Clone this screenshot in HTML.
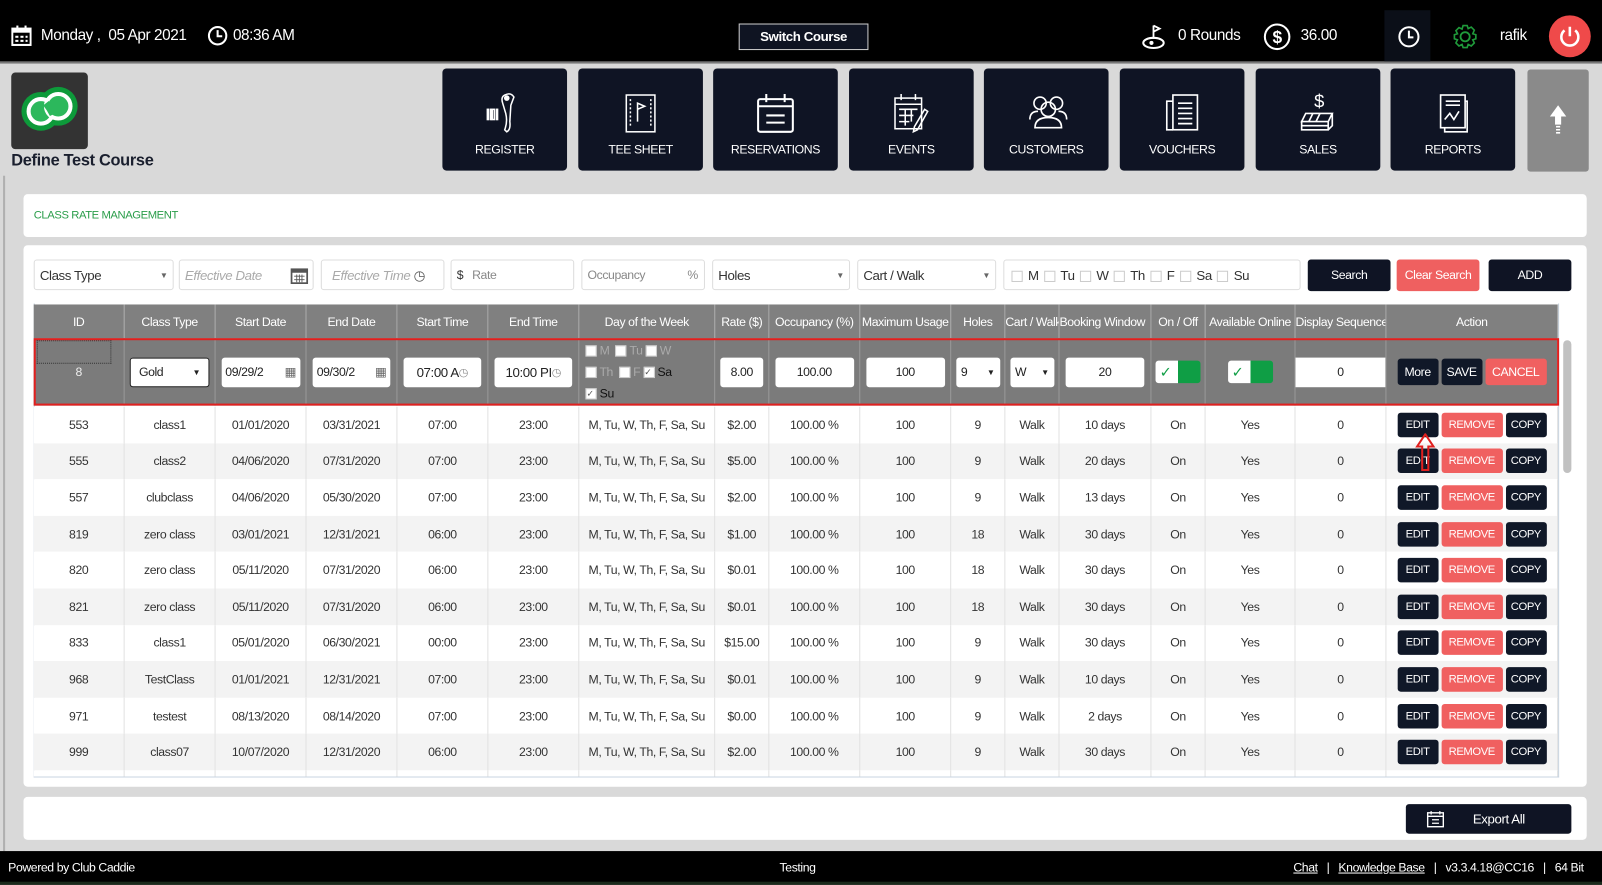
<!DOCTYPE html>
<html><head><meta charset="utf-8">
<style>
*{box-sizing:border-box;margin:0;padding:0}
body{width:1602px;height:885px;overflow:hidden;background:#d9d9d9;font-family:"Liberation Sans Narrow","Liberation Sans",sans-serif;letter-spacing:-0.4px}
#w{position:absolute;left:0;top:0;width:1568px;height:866px;transform:scale(1.0217);transform-origin:0 0;background:#d9d9d9}
.a{position:absolute}
.top{left:0;top:0;width:1568px;height:62px;background:#000;border-bottom:2px solid #777}
.wt{color:#fff;font-size:15px}
.nav{top:67px;width:122px;height:100px;background:#0f1424;border-radius:4px;color:#fff;font-size:12px;text-align:center}
.nav span{position:absolute;left:0;right:0;top:72px}
.nav svg{position:absolute;left:41px;top:22px}
.panel{background:#fff;border-radius:4px;left:23px;width:1530px}
.inp{top:254px;height:30px;background:#fff;border:1px solid #ddd;border-radius:3px;font-size:13px;color:#333;padding:7px 5px}
.ph{color:#aaa;font-style:italic}
.btn{color:#fff;font-size:12px;text-align:center;border-radius:3px}
.g{display:grid;grid-template-columns:89px 89px 89px 89px 89px 89px 133px 53px 89px 89px 53px 53px 90px 53px 88px 89px 168px;position:absolute;left:33px;width:1492px}
.g>div{border-right:1px solid #e2e2e2;display:flex;align-items:center;justify-content:center;font-size:12px;color:#333;white-space:nowrap;overflow:hidden}
.hd>div{color:#fff;border-right:1px solid #aaa;background:#808080}
.r{height:35.6px}
.r:nth-child(even){background:#f3f3f3}
.r:nth-child(odd){background:#fff}
.eb{display:inline-block;height:24px;line-height:24px;color:#fff;font-size:11px;border-radius:3px;margin:0 1.5px;text-align:center}
.ed{background:#101828;width:40px}.rm{background:#f06060;width:60px}.cp{background:#101828;width:40px}
.wi{background:#fff;height:29px;border-radius:3px;font-size:12px;color:#222;display:flex;align-items:center;justify-content:center}
.cb{display:inline-block;width:11px;height:11px;background:#fff;border:1px solid #ccc;vertical-align:middle}
</style></head><body><div id="w">
<div class="a top"></div>
<svg class="a" style="left:11px;top:25px" width="20" height="20" viewBox="0 0 20 20"><rect x="1" y="3" width="18" height="16" fill="none" stroke="#fff" stroke-width="2"/><rect x="1" y="3" width="18" height="4" fill="#fff"/><g fill="#fff"><rect x="4" y="10" width="3" height="2"/><rect x="9" y="10" width="3" height="2"/><rect x="14" y="10" width="2" height="2"/><rect x="4" y="14" width="3" height="2"/><rect x="9" y="14" width="3" height="2"/><rect x="14" y="14" width="2" height="2"/><rect x="5" y="0" width="2" height="4"/><rect x="13" y="0" width="2" height="4"/></g></svg>
<div class="a wt" style="left:40px;top:26px">Monday ,&nbsp; 05 Apr 2021</div>
<svg class="a" style="left:203px;top:25px" width="20" height="20" viewBox="0 0 20 20"><circle cx="10" cy="10" r="8.5" fill="none" stroke="#fff" stroke-width="2"/><path d="M10 4.5V10.5H14.5" fill="none" stroke="#fff" stroke-width="2"/></svg>
<div class="a wt" style="left:228px;top:26px">08:36 AM</div>
<div class="a" style="left:723px;top:23px;width:127px;height:26px;border:1.5px solid #ccc;background:#0f1422;color:#fff;font-weight:bold;font-size:13px;text-align:center;line-height:23px;font-family:'Liberation Sans',sans-serif">Switch Course</div>
<svg class="a" style="left:1116px;top:22px" width="28" height="28" viewBox="0 0 28 28"><path d="M13 3V16M13 3L19 6L13 9" fill="none" stroke="#fff" stroke-width="1.8"/><ellipse cx="13" cy="20" rx="10" ry="5" fill="none" stroke="#fff" stroke-width="2"/><circle cx="11" cy="20" r="2" fill="#fff"/></svg>
<div class="a wt" style="left:1153px;top:26px">0 Rounds</div>
<svg class="a" style="left:1236px;top:22px" width="28" height="28" viewBox="0 0 28 28"><circle cx="14" cy="14" r="12" fill="none" stroke="#fff" stroke-width="2"/><text x="14" y="20" text-anchor="middle" fill="#fff" font-size="17" font-weight="bold" font-family="Liberation Sans">$</text></svg>
<div class="a wt" style="left:1273px;top:26px">36.00</div>
<div class="a" style="left:1355px;top:10px;width:45px;height:50px;background:#0b0f18"></div>
<svg class="a" style="left:1368px;top:25px" width="22" height="22" viewBox="0 0 20 20"><circle cx="10" cy="10" r="8.5" fill="none" stroke="#fff" stroke-width="1.8"/><path d="M10 4.5V10.5H14" fill="none" stroke="#fff" stroke-width="1.8"/></svg>
<svg class="a" style="left:1420px;top:22px" width="28" height="28" viewBox="0 0 28 28"><circle cx="14" cy="14" r="4.5" fill="none" stroke="#1f9a3a" stroke-width="1.8"/><path d="M12 3h4l1 3 3-1.5 3 3L21.5 11l3 1v4l-3 1 1.5 3-3 3-3-1.5-1 3h-4l-1-3-3 1.5-3-3L6.5 17l-3-1v-4l3-1L5 8l3-3 3 1.5z" fill="none" stroke="#1f9a3a" stroke-width="1.6"/></svg>
<div class="a wt" style="left:1468px;top:26px">rafik</div>
<div class="a" style="left:1516px;top:15px;width:41px;height:41px;border-radius:50%;background:#ef4a4a"></div>
<svg class="a" style="left:1524px;top:23px" width="25" height="25" viewBox="0 0 24 24"><path d="M7 6.5A8 8 0 1 0 17 6.5" fill="none" stroke="#fff" stroke-width="2.4"/><path d="M12 3V12" stroke="#fff" stroke-width="2.4"/></svg>

<div class="a" style="left:11px;top:71px;width:75px;height:75px;background:#333;border-radius:4px"></div>
<svg class="a" style="left:16px;top:82px" width="66" height="50" viewBox="0 0 66 50"><circle cx="24" cy="27" r="19" fill="#0d9a3a"/><circle cx="41" cy="22" r="19" fill="#0d9a3a"/><circle cx="24" cy="27" r="12" fill="#2cb85c" stroke="#fff" stroke-width="4"/><circle cx="41" cy="22" r="12" fill="#2cb85c" stroke="#fff" stroke-width="4"/><path d="M29 19Q33 24 36 30" stroke="#2cb85c" stroke-width="7"/></svg>
<div class="a" style="left:11px;top:149px;font-size:16px;font-weight:bold;color:#1a1f2e;font-family:'Liberation Sans',sans-serif;letter-spacing:-0.3px">Define Test Course</div>

<div class="a nav" style="left:433px"><svg width="40" height="44" viewBox="0 0 40 44"><g stroke="#fff" fill="none" stroke-width="1.5"><rect x="3" y="18" width="1" height="10"/><rect x="6" y="18" width="1" height="10"/><rect x="8" y="18" width="2" height="10"/><rect x="12" y="18" width="1" height="10"/><path d="M20 4Q26 1 29 6L26 14L25 30Q26 38 22 40L20 38Q23 30 21 22L18 12Q16 6 20 4Z"/><circle cx="22" cy="7" r="2" fill="#fff"/></g></svg><span>REGISTER</span></div>
<div class="a nav" style="left:566px"><svg width="40" height="44" viewBox="0 0 40 44"><g stroke="#fff" fill="none" stroke-width="1.5"><rect x="6" y="4" width="28" height="36"/><path d="M10 8V36M30 8V36" stroke-dasharray="2 2"/><path d="M17 30V12L24 15L17 18"/></g></svg><span>TEE SHEET</span></div>
<div class="a nav" style="left:698px"><svg width="40" height="44" viewBox="0 0 40 44"><g stroke="#fff" fill="none" stroke-width="2"><rect x="3" y="8" width="34" height="32" rx="2"/><path d="M3 15H37M11 3V11M29 3V11M11 24H29M11 31H29"/></g></svg><span>RESERVATIONS</span></div>
<div class="a nav" style="left:831px"><svg width="40" height="44" viewBox="0 0 40 44"><g stroke="#fff" fill="none" stroke-width="1.5"><rect x="4" y="7" width="26" height="30"/><path d="M4 13H30M10 3V9M24 3V9M8 18H26M8 24H22M8 30H18M14 18V34M20 18V30M36 20L26 38L22 40L23 35L33 18Z"/></g></svg><span>EVENTS</span></div>
<div class="a nav" style="left:963px"><svg width="44" height="44" viewBox="0 0 44 44"><g stroke="#fff" fill="none" stroke-width="1.6"><circle cx="14" cy="12" r="6"/><circle cx="30" cy="12" r="6"/><circle cx="22" cy="18" r="7"/><path d="M9 36Q9 26 22 26Q35 26 35 36ZM4 28Q4 20 12 20M40 28Q40 20 32 20"/></g></svg><span>CUSTOMERS</span></div>
<div class="a nav" style="left:1096px"><svg width="40" height="44" viewBox="0 0 40 44"><g stroke="#fff" fill="none" stroke-width="1.6"><rect x="11" y="4" width="24" height="34"/><path d="M11 10H5V38H11M16 12H30M16 17H30M16 22H30M16 27H30M16 32H30"/></g></svg><span>VOUCHERS</span></div>
<div class="a nav" style="left:1229px"><svg width="40" height="44" viewBox="0 0 40 44"><text x="21" y="16" text-anchor="middle" fill="#fff" font-size="18" font-family="Liberation Sans">$</text><g stroke="#fff" fill="none" stroke-width="1.6"><path d="M8 22H34L30 30H4ZM4 30H30V34H4ZM4 34H30V38H4ZM30 30L34 22V34L30 38M15 22L11 30M22 22L18 30"/></g></svg><span>SALES</span></div>
<div class="a nav" style="left:1361px"><svg width="40" height="44" viewBox="0 0 40 44"><g stroke="#fff" fill="none" stroke-width="1.6"><rect x="8" y="4" width="24" height="32"/><path d="M12 36V40H34V10H32M13 10H27M13 14H27M12 28L17 22L21 28L26 20"/></g></svg><span>REPORTS</span></div>
<div class="a" style="left:1495px;top:68px;width:60px;height:100px;background:#8a8a8a;border-radius:3px"></div>
<svg class="a" style="left:1516px;top:102px" width="18" height="30" viewBox="0 0 18 30"><path d="M9 1L17 12H12V20H6V12H1Z" fill="#fff"/><path d="M7 22H11M7 25H11M7 28H11" stroke="#fff" stroke-width="1.5"/></svg>
<div class="a" style="left:3px;top:172px;width:2px;height:661px;background:#b0b0b0"></div>

<div class="a panel" style="top:190px;height:42px"><div class="a" style="left:10px;top:15px;font-size:11px;color:#2a9d4a;font-family:'Liberation Sans',sans-serif">CLASS RATE MANAGEMENT</div></div>
<div class="a panel" style="top:240px;height:530px"></div>

<div class="a inp" style="left:33px;width:137px">Class Type<span style="position:absolute;right:5px;font-size:8px;top:10px;color:#666">▼</span></div>
<div class="a inp ph" style="left:175px;width:132px">Effective Date</div>
<svg class="a" style="left:284px;top:261px" width="18" height="17" viewBox="0 0 20 20"><rect x="1" y="3" width="18" height="16" fill="none" stroke="#555" stroke-width="2"/><rect x="1" y="3" width="18" height="4" fill="#555"/><path d="M4 11H16M4 15H16M7 9V18M10 9V18M13 9V18" stroke="#555"/></svg>
<div class="a inp ph" style="left:314px;width:121px;padding-left:10px">Effective Time <span style="font-style:normal;color:#555">&#9719;</span></div>
<div class="a inp" style="left:441px;width:121px;font-size:12px">$&nbsp;&nbsp; <span style="color:#888">Rate</span></div>
<div class="a inp" style="left:569px;width:121px;font-size:12px;color:#888">Occupancy<span style="position:absolute;right:6px">%</span></div>
<div class="a inp" style="left:697px;width:135px">Holes<span style="position:absolute;right:5px;font-size:8px;top:10px;color:#666">▼</span></div>
<div class="a inp" style="left:839px;width:136px">Cart / Walk<span style="position:absolute;right:5px;font-size:8px;top:10px;color:#666">▼</span></div>
<div class="a inp" style="left:982px;width:291px;padding-left:7px;font-size:13px;word-spacing:2px"><span class="cb"></span> M <span class="cb"></span> Tu <span class="cb"></span> W <span class="cb"></span> Th <span class="cb"></span> F <span class="cb"></span> Sa <span class="cb"></span> Su</div>
<div class="a btn" style="left:1280px;top:254px;width:81px;height:31px;line-height:31px;background:#0f1424">Search</div>
<div class="a btn" style="left:1367px;top:254px;width:81px;height:31px;line-height:31px;background:#ef6060">Clear Search</div>
<div class="a btn" style="left:1457px;top:254px;width:81px;height:31px;line-height:31px;background:#0f1424">ADD</div>

<div class="a" style="left:33px;top:297px;width:1493px;height:464px;border:1px solid #c8d4e0;border-top:none"></div>
<div class="g hd" style="top:298px;height:33px"><div>ID</div><div>Class Type</div><div>Start Date</div><div>End Date</div><div>Start Time</div><div>End Time</div><div>Day of the Week</div><div>Rate ($)</div><div>Occupancy (%)</div><div>Maximum Usage</div><div>Holes</div><div style="justify-content:flex-start">Cart / Walk</div><div style="justify-content:flex-start">Booking Window</div><div>On / Off</div><div>Available Online</div><div style="justify-content:flex-start">Display Sequence</div><div>Action</div></div>

<div class="g" style="top:331px;height:66px;background:#7b7b7b">
<div style="color:#eee;border-right-color:#999;position:relative"><span style="position:absolute;left:3px;top:2px;width:73px;height:23px;border:1px dotted #333"></span>8</div>
<div style="border-right-color:#999"><div class="wi" style="width:78px;border:1.5px solid #222;justify-content:space-between;padding:0 8px">Gold<span style="font-size:8px">▼</span></div></div>
<div style="border-right-color:#999"><div class="wi" style="width:77px;justify-content:space-between;padding:0 4px">09/29/2 <span style="color:#666">▦</span></div></div>
<div style="border-right-color:#999"><div class="wi" style="width:76px;justify-content:space-between;padding:0 4px">09/30/2 <span style="color:#666">▦</span></div></div>
<div style="border-right-color:#999"><div class="wi" style="width:76px;font-size:13px">07:00 A <span style="color:#888;font-size:11px">&#9719;</span></div></div>
<div style="border-right-color:#999"><div class="wi" style="width:76px;font-size:13px">10:00 PI <span style="color:#888;font-size:11px">&#9719;</span></div></div>
<div style="border-right-color:#999;display:block;padding:2px 0 0 6px;font-size:12px;line-height:21px;color:#aaa;white-space:normal"><span class="cb"></span> M &nbsp;<span class="cb"></span> Tu <span class="cb"></span> W<br><span class="cb"></span> Th &nbsp;<span class="cb"></span> F <span class="cb" style="font-size:9px;line-height:9px;color:#555">✓</span> <span style="color:#111">Sa</span><br><span class="cb" style="font-size:9px;line-height:9px;color:#555">✓</span> <span style="color:#111">Su</span></div>
<div style="border-right-color:#999"><div class="wi" style="width:42px">8.00</div></div>
<div style="border-right-color:#999"><div class="wi" style="width:77px">100.00</div></div>
<div style="border-right-color:#999"><div class="wi" style="width:77px">100</div></div>
<div style="border-right-color:#999"><div class="wi" style="width:43px;justify-content:space-between;padding:0 5px">9<span style="font-size:8px">▼</span></div></div>
<div style="border-right-color:#999"><div class="wi" style="width:43px;justify-content:space-between;padding:0 5px">W<span style="font-size:8px">▼</span></div></div>
<div style="border-right-color:#999"><div class="wi" style="width:77px">20</div></div>
<div style="border-right-color:#999"><div style="width:44px;height:22px;border-radius:3px;background:linear-gradient(90deg,#fff 50%,#0f9e45 50%);color:#0f9e45;font-size:14px;padding-left:4px;line-height:22px">✓</div></div>
<div style="border-right-color:#999"><div style="width:44px;height:22px;border-radius:3px;background:linear-gradient(90deg,#fff 50%,#0f9e45 50%);color:#0f9e45;font-size:14px;padding-left:4px;line-height:22px">✓</div></div>
<div style="border-right-color:#999;justify-content:flex-start"><div class="wi" style="width:88px;border-radius:0">0</div></div>
<div><span class="eb" style="background:#101828;width:40px;height:26px;line-height:26px;font-size:12px">More</span><span class="eb" style="background:#101828;width:40px;height:26px;line-height:26px;font-size:12px">SAVE</span><span class="eb" style="background:#f06060;width:60px;height:26px;line-height:26px;font-size:12px">CANCEL</span></div>
</div>
<div class="a" style="left:33px;top:331px;width:1493px;height:66px;border:2px solid #e0201f"></div>

<div class="a" style="left:33px;top:398px;width:1492px;height:362px;overflow:hidden">
<div style="position:relative">
<div class="g r" style="position:relative;left:0"><div>553</div><div>class1</div><div>01/01/2020</div><div>03/31/2021</div><div>07:00</div><div>23:00</div><div>M, Tu, W, Th, F, Sa, Su</div><div>$2.00</div><div>100.00 %</div><div>100</div><div>9</div><div>Walk</div><div>10 days</div><div>On</div><div>Yes</div><div>0</div><div><span class="eb ed">EDIT</span><span class="eb rm">REMOVE</span><span class="eb cp">COPY</span></div></div>
<div class="g r" style="position:relative;left:0"><div>555</div><div>class2</div><div>04/06/2020</div><div>07/31/2020</div><div>07:00</div><div>23:00</div><div>M, Tu, W, Th, F, Sa, Su</div><div>$5.00</div><div>100.00 %</div><div>100</div><div>9</div><div>Walk</div><div>20 days</div><div>On</div><div>Yes</div><div>0</div><div><span class="eb ed">EDIT</span><span class="eb rm">REMOVE</span><span class="eb cp">COPY</span></div></div>
<div class="g r" style="position:relative;left:0"><div>557</div><div>clubclass</div><div>04/06/2020</div><div>05/30/2020</div><div>07:00</div><div>23:00</div><div>M, Tu, W, Th, F, Sa, Su</div><div>$2.00</div><div>100.00 %</div><div>100</div><div>9</div><div>Walk</div><div>13 days</div><div>On</div><div>Yes</div><div>0</div><div><span class="eb ed">EDIT</span><span class="eb rm">REMOVE</span><span class="eb cp">COPY</span></div></div>
<div class="g r" style="position:relative;left:0"><div>819</div><div>zero class</div><div>03/01/2021</div><div>12/31/2021</div><div>06:00</div><div>23:00</div><div>M, Tu, W, Th, F, Sa, Su</div><div>$1.00</div><div>100.00 %</div><div>100</div><div>18</div><div>Walk</div><div>30 days</div><div>On</div><div>Yes</div><div>0</div><div><span class="eb ed">EDIT</span><span class="eb rm">REMOVE</span><span class="eb cp">COPY</span></div></div>
<div class="g r" style="position:relative;left:0"><div>820</div><div>zero class</div><div>05/11/2020</div><div>07/31/2020</div><div>06:00</div><div>23:00</div><div>M, Tu, W, Th, F, Sa, Su</div><div>$0.01</div><div>100.00 %</div><div>100</div><div>18</div><div>Walk</div><div>30 days</div><div>On</div><div>Yes</div><div>0</div><div><span class="eb ed">EDIT</span><span class="eb rm">REMOVE</span><span class="eb cp">COPY</span></div></div>
<div class="g r" style="position:relative;left:0"><div>821</div><div>zero class</div><div>05/11/2020</div><div>07/31/2020</div><div>06:00</div><div>23:00</div><div>M, Tu, W, Th, F, Sa, Su</div><div>$0.01</div><div>100.00 %</div><div>100</div><div>18</div><div>Walk</div><div>30 days</div><div>On</div><div>Yes</div><div>0</div><div><span class="eb ed">EDIT</span><span class="eb rm">REMOVE</span><span class="eb cp">COPY</span></div></div>
<div class="g r" style="position:relative;left:0"><div>833</div><div>class1</div><div>05/01/2020</div><div>06/30/2021</div><div>00:00</div><div>23:00</div><div>M, Tu, W, Th, F, Sa, Su</div><div>$15.00</div><div>100.00 %</div><div>100</div><div>9</div><div>Walk</div><div>30 days</div><div>On</div><div>Yes</div><div>0</div><div><span class="eb ed">EDIT</span><span class="eb rm">REMOVE</span><span class="eb cp">COPY</span></div></div>
<div class="g r" style="position:relative;left:0"><div>968</div><div>TestClass</div><div>01/01/2021</div><div>12/31/2021</div><div>07:00</div><div>23:00</div><div>M, Tu, W, Th, F, Sa, Su</div><div>$0.01</div><div>100.00 %</div><div>100</div><div>9</div><div>Walk</div><div>10 days</div><div>On</div><div>Yes</div><div>0</div><div><span class="eb ed">EDIT</span><span class="eb rm">REMOVE</span><span class="eb cp">COPY</span></div></div>
<div class="g r" style="position:relative;left:0"><div>971</div><div>testest</div><div>08/13/2020</div><div>08/14/2020</div><div>07:00</div><div>23:00</div><div>M, Tu, W, Th, F, Sa, Su</div><div>$0.00</div><div>100.00 %</div><div>100</div><div>9</div><div>Walk</div><div>2 days</div><div>On</div><div>Yes</div><div>0</div><div><span class="eb ed">EDIT</span><span class="eb rm">REMOVE</span><span class="eb cp">COPY</span></div></div>
<div class="g r" style="position:relative;left:0"><div>999</div><div>class07</div><div>10/07/2020</div><div>12/31/2020</div><div>06:00</div><div>23:00</div><div>M, Tu, W, Th, F, Sa, Su</div><div>$2.00</div><div>100.00 %</div><div>100</div><div>9</div><div>Walk</div><div>30 days</div><div>On</div><div>Yes</div><div>0</div><div><span class="eb ed">EDIT</span><span class="eb rm">REMOVE</span><span class="eb cp">COPY</span></div></div>
<div class="g r" style="position:relative;left:0"><div></div><div></div><div></div><div></div><div></div><div></div><div></div><div></div><div></div><div></div><div></div><div></div><div></div><div></div><div></div><div></div><div></div></div>
</div></div>
<div class="a" style="left:1530px;top:333px;width:8px;height:130px;background:#c1c1c1;border-radius:4px"></div>
<svg class="a" style="left:1385px;top:424px" width="20" height="38" viewBox="0 0 20 38"><path d="M10 1L18 13H13V36H7V13H2Z" fill="none" stroke="#e0201f" stroke-width="2"/></svg>

<div class="a panel" style="top:780px;height:42px"></div>
<div class="a btn" style="left:1376px;top:787px;width:162px;height:29px;background:#0f1424;font-size:13px;line-height:29px;padding-left:20px">Export All</div>
<svg class="a" style="left:1396px;top:793px" width="18" height="17" viewBox="0 0 20 20"><rect x="1" y="3" width="18" height="16" fill="none" stroke="#fff" stroke-width="1.6"/><path d="M1 7H19M5 1V5M15 1V5M6 11H14M6 15H14" stroke="#fff" stroke-width="1.5"/></svg>

<div class="a" style="left:0;top:833px;width:1568px;height:33px;background:#000;border-bottom:3px solid #1b2a1b;color:#fff;font-size:12px">
<span class="a" style="left:8px;top:9px">Powered by Club Caddie</span>
<span class="a" style="left:763px;top:9px">Testing</span>
<span class="a" style="right:18px;top:9px;white-space:pre"><u>Chat</u>   |   <u>Knowledge Base</u>   |   v3.3.4.18@CC16   |   64 Bit</span>
</div>
</div></body></html>
